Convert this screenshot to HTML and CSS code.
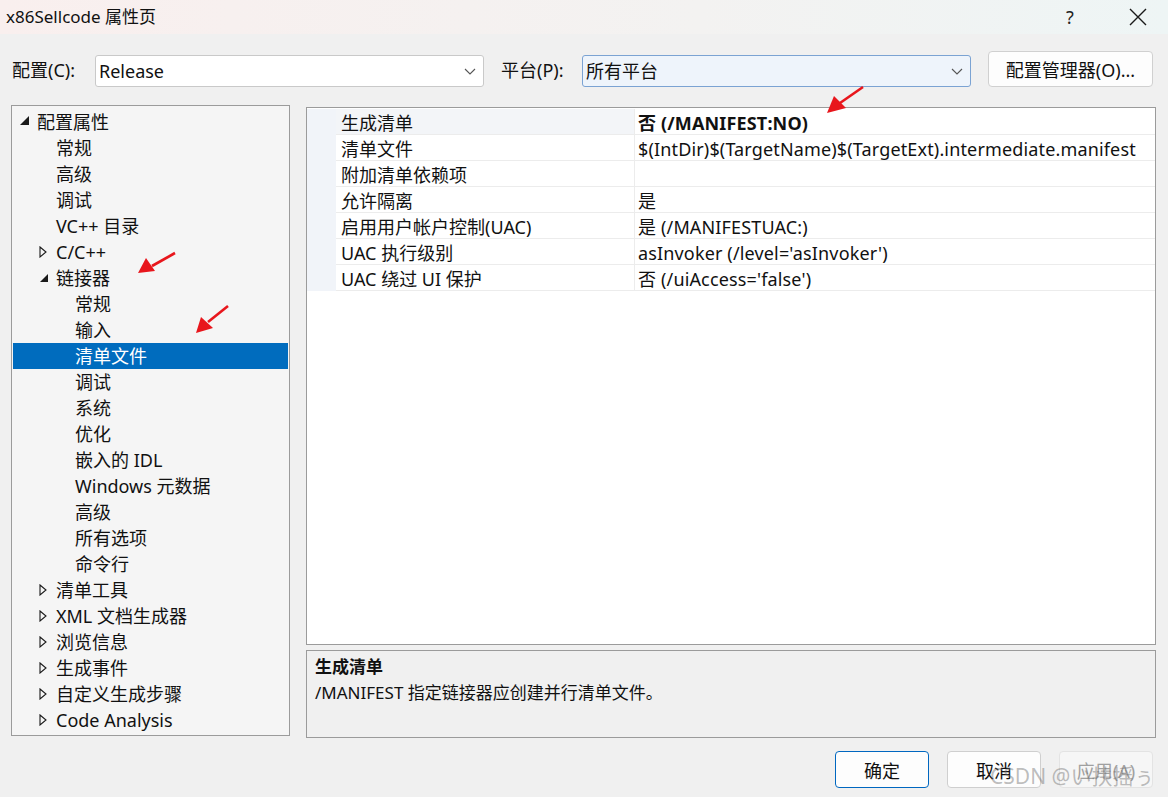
FILE: index.html
```html
<!DOCTYPE html>
<html lang="zh-CN">
<head>
  <meta charset="UTF-8">
  <title>x86Sellcode 属性页</title>
  <link rel="stylesheet" href="styles.css">
</head>
<body>
<div class="window">

  <div class="titlebar">
    <span class="title">x86Sellcode 属性页</span>
    <span class="help">?</span>
    <span class="close">
      <svg width="18" height="18" viewBox="0 0 18 18"><path d="M1 1L17 17M17 1L1 17" stroke="#1a1a1a" stroke-width="1.4" fill="none"/></svg>
    </span>
  </div>

  <div class="toolbar">
    <span class="tb-label">配置(C):</span>
    <div class="combo combo-config">
      <span>Release</span>
      <svg class="chev" width="12" height="7" viewBox="0 0 12 7"><path d="M1 1L6 6L11 1" stroke="#555" stroke-width="1.1" fill="none"/></svg>
    </div>
    <span class="tb-label tb-platform">平台(P):</span>
    <div class="combo combo-platform">
      <span>所有平台</span>
      <svg class="chev" width="12" height="7" viewBox="0 0 12 7"><path d="M1 1L6 6L11 1" stroke="#555" stroke-width="1.1" fill="none"/></svg>
    </div>
    <button class="btn-manager">配置管理器(O)...</button>
  </div>

  <div class="main">
    <div class="tree">
      <div class="node lv0"><span class="tog"><svg width="10" height="10" viewBox="0 0 10 10"><polygon points="9,0 9,9 0,9" fill="#1a1a1a"/></svg></span>配置属性</div>
      <div class="node lv1"><span class="tog"></span>常规</div>
      <div class="node lv1"><span class="tog"></span>高级</div>
      <div class="node lv1"><span class="tog"></span>调试</div>
      <div class="node lv1"><span class="tog"></span>VC++ 目录</div>
      <div class="node lv1"><span class="tog"><svg width="9" height="12" viewBox="0 0 9 12"><polygon points="1,1 7,6 1,11" fill="none" stroke="#1a1a1a" stroke-width="1.1"/></svg></span>C/C++</div>
      <div class="node lv1"><span class="tog"><svg width="10" height="10" viewBox="0 0 10 10"><polygon points="9,1 9,9 1,9" fill="#1a1a1a"/></svg></span>链接器</div>
      <div class="node lv2"><span class="tog"></span>常规</div>
      <div class="node lv2"><span class="tog"></span>输入</div>
      <div class="node lv2 selected"><span class="tog"></span>清单文件</div>
      <div class="node lv2"><span class="tog"></span>调试</div>
      <div class="node lv2"><span class="tog"></span>系统</div>
      <div class="node lv2"><span class="tog"></span>优化</div>
      <div class="node lv2"><span class="tog"></span>嵌入的 IDL</div>
      <div class="node lv2"><span class="tog"></span>Windows 元数据</div>
      <div class="node lv2"><span class="tog"></span>高级</div>
      <div class="node lv2"><span class="tog"></span>所有选项</div>
      <div class="node lv2"><span class="tog"></span>命令行</div>
      <div class="node lv1"><span class="tog"><svg width="9" height="12" viewBox="0 0 9 12"><polygon points="1,1 7,6 1,11" fill="none" stroke="#1a1a1a" stroke-width="1.1"/></svg></span>清单工具</div>
      <div class="node lv1"><span class="tog"><svg width="9" height="12" viewBox="0 0 9 12"><polygon points="1,1 7,6 1,11" fill="none" stroke="#1a1a1a" stroke-width="1.1"/></svg></span>XML 文档生成器</div>
      <div class="node lv1"><span class="tog"><svg width="9" height="12" viewBox="0 0 9 12"><polygon points="1,1 7,6 1,11" fill="none" stroke="#1a1a1a" stroke-width="1.1"/></svg></span>浏览信息</div>
      <div class="node lv1"><span class="tog"><svg width="9" height="12" viewBox="0 0 9 12"><polygon points="1,1 7,6 1,11" fill="none" stroke="#1a1a1a" stroke-width="1.1"/></svg></span>生成事件</div>
      <div class="node lv1"><span class="tog"><svg width="9" height="12" viewBox="0 0 9 12"><polygon points="1,1 7,6 1,11" fill="none" stroke="#1a1a1a" stroke-width="1.1"/></svg></span>自定义生成步骤</div>
      <div class="node lv1"><span class="tog"><svg width="9" height="12" viewBox="0 0 9 12"><polygon points="1,1 7,6 1,11" fill="none" stroke="#1a1a1a" stroke-width="1.1"/></svg></span>Code Analysis</div>
    </div>

    <div class="right">
      <div class="grid">
        <div class="prop first">
          <div class="gutter"></div>
          <div class="pname">生成清单</div>
          <div class="pval bold">否 (/MANIFEST:NO)</div>
        </div>
        <div class="prop">
          <div class="gutter"></div>
          <div class="pname">清单文件</div>
          <div class="pval">$(IntDir)$(TargetName)$(TargetExt).intermediate.manifest</div>
        </div>
        <div class="prop">
          <div class="gutter"></div>
          <div class="pname">附加清单依赖项</div>
          <div class="pval"></div>
        </div>
        <div class="prop">
          <div class="gutter"></div>
          <div class="pname">允许隔离</div>
          <div class="pval">是</div>
        </div>
        <div class="prop">
          <div class="gutter"></div>
          <div class="pname">启用用户帐户控制(UAC)</div>
          <div class="pval">是 (/MANIFESTUAC:)</div>
        </div>
        <div class="prop">
          <div class="gutter"></div>
          <div class="pname">UAC 执行级别</div>
          <div class="pval">asInvoker (/level='asInvoker')</div>
        </div>
        <div class="prop">
          <div class="gutter"></div>
          <div class="pname">UAC 绕过 UI 保护</div>
          <div class="pval">否 (/uiAccess='false')</div>
        </div>
      </div>
      <div class="desc">
        <div class="desc-title">生成清单</div>
        <div class="desc-text">/MANIFEST 指定链接器应创建并行清单文件。</div>
      </div>
    </div>
  </div>

  <div class="footer">
    <button class="btn btn-ok">确定</button>
    <button class="btn">取消</button>
    <button class="btn btn-off">应用(A)</button>
  </div>

  <!-- annotation arrows drawn over the screenshot -->
  <svg class="arrows" width="1168" height="797" viewBox="0 0 1168 797">
    <g stroke="#e8161c" stroke-width="2.6" fill="#e8161c">
      <line x1="863" y1="87" x2="840" y2="103"/>
      <polygon points="827,113 834,96 846,108" stroke="none"/>
      <line x1="175" y1="253" x2="152" y2="266"/>
      <polygon points="138,273 146,258 155,271" stroke="none"/>
      <line x1="228" y1="306" x2="208" y2="322"/>
      <polygon points="196,333 201,317 213,328" stroke="none"/>
    </g>
  </svg>

  <div class="watermark">CSDN @い扶摇ぅ</div>
</div>
</body>
</html>
```

FILE: styles.css
```css
body {
  margin: 0;
  padding: 0;
  background: #f0f0f0;
  font-family: "Noto Sans", "Noto Sans CJK SC", sans-serif;
  color: #111;
}

.window {
  position: relative;
  width: 1168px;
  height: 797px;
  overflow: hidden;
  background: #f0f0f0;
}

.titlebar {
  height: 34px;
  display: flex;
  align-items: center;
  background: linear-gradient(to right, #f9efee, #f3f2f1 60%, #eef5f5);
  font-size: 17px;
}

.title {
  padding-left: 6px;
  flex: 1;
  line-height: 20px;
}

.help {
  width: 24px;
  font-size: 18px;
  color: #222;
  margin-right: 47px;
  text-align: center;
}

.close {
  display: flex;
  margin-right: 21px;
}

.toolbar {
  margin-top: 18px;
  height: 35px;
  display: flex;
  align-items: center;
  font-size: 18px;
}

.tb-label {
  padding-left: 12px;
  width: 83px;
  line-height: 22px;
}

.tb-platform {
  padding-left: 17px;
  width: 81px;
}

.combo {
  display: flex;
  align-items: center;
  justify-content: space-between;
  border: 1px solid #c9c9c9;
  border-radius: 3px;
  background: #fff;
  padding: 0 6px 0 3px;
  margin-top: 3px;
  box-sizing: border-box;
  height: 32px;
}

.combo span {
  line-height: 22px;
}

.combo-config {
  width: 389px;
}

.combo-platform {
  width: 389px;
  background: #eef4fb;
  border-color: #7ba3d3;
}

.chev {
  margin-right: 1px;
}

.btn-manager {
  margin-left: 17px;
  width: 165px;
  height: 36px;
  margin-top: -2px;
  border: 1px solid #d0d0d0;
  border-radius: 4px;
  background: #fdfdfd;
  font-family: inherit;
  font-size: 18px;
  color: #111;
  padding: 0;
}

.main {
  display: flex;
  margin-top: 18px;
  margin-left: 11px;
}

.tree {
  width: 279px;
  height: 631px;
  box-sizing: border-box;
  border: 1px solid #9b9b9b;
  background: #f5f5f5;
  padding: 3px 1px 0 1px;
  font-size: 18px;
}

.node {
  height: 26px;
  line-height: 26px;
  display: flex;
  align-items: center;
  white-space: nowrap;
}

.node .tog {
  width: 17px;
  height: 26px;
  display: flex;
  align-items: center;
  justify-content: flex-start;
}

.lv0 { padding-left: 7px; }
.lv1 { padding-left: 26px; }
.lv2 { padding-left: 45px; }

.lv0 .tog svg { margin-top: -2px; }

.node.selected {
  background: #006cbe;
  color: #fff;
}

.right {
  margin-left: 16px;
  display: flex;
  flex-direction: column;
}

.grid {
  margin-top: 2px;
  width: 850px;
  height: 538px;
  box-sizing: border-box;
  border: 1px solid #9b9b9b;
  background: #fff;
  padding-top: 1px;
  font-size: 18px;
}

.prop {
  display: flex;
  height: 26px;
}

.prop .gutter {
  width: 29px;
  background: #f1f4f9;
}

.pname {
  width: 293px;
  padding-left: 5px;
  border-bottom: 1px solid #ececec;
  border-right: 1px solid #ececec;
  line-height: 25px;
  padding-top: 2px;
  height: 23px;
  white-space: nowrap;
}

.pval {
  flex: 1;
  padding-left: 3px;
  border-bottom: 1px solid #ececec;
  line-height: 25px;
  padding-top: 2px;
  height: 23px;
  white-space: nowrap;
  letter-spacing: 0.15px;
}

.prop.first .pname {
  background: #f3f5f8;
}

.pval.bold {
  font-weight: bold;
}

.desc {
  margin-top: 5px;
  width: 850px;
  height: 88px;
  box-sizing: border-box;
  border: 1px solid #9b9b9b;
  background: #f0f0f0;
  padding: 3px 8px;
  font-size: 17px;
}

.desc-title {
  font-weight: bold;
  line-height: 26px;
}

.desc-text {
  line-height: 26px;
}

.footer {
  display: flex;
  justify-content: flex-end;
  gap: 18px;
  margin-top: 13px;
  padding-right: 15px;
}

.btn {
  width: 94px;
  height: 37px;
  border: 1px solid #cfcfcf;
  border-radius: 4px;
  background: #fdfdfd;
  font-family: inherit;
  font-size: 18px;
  color: #111;
  padding: 0;
}

.btn-ok {
  border-color: #0067c0;
}

.btn-off {
  background: #f6f6f6;
  border-color: #e3e3e3;
  color: #a0a0a0;
}

.arrows {
  position: absolute;
  left: 0;
  top: 0;
  pointer-events: none;
}

.watermark {
  position: absolute;
  left: 990px;
  top: 760px;
  font-size: 21px;
  color: rgba(110, 110, 110, 0.45);
  white-space: nowrap;
  pointer-events: none;
}
```
